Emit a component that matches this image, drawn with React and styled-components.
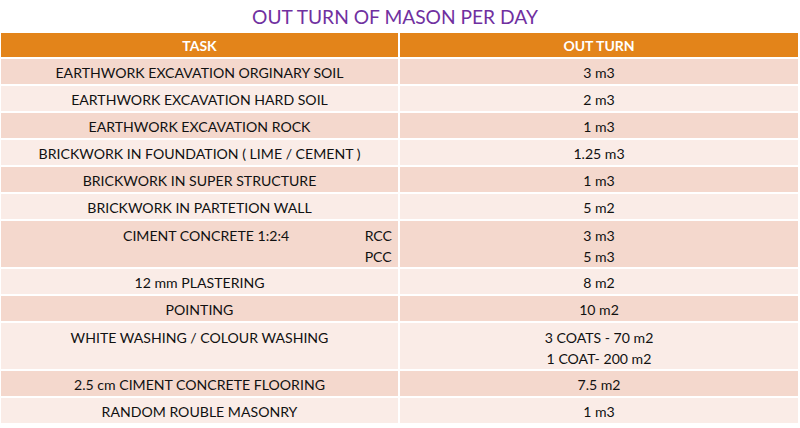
import React from "react";
import styled, { createGlobalStyle } from "styled-components";

const Global = createGlobalStyle`
  html, body { margin: 0; padding: 0; background: #ffffff; }
  body { font-family: Lato, "Open Sans", sans-serif; }
`;

const Page = styled.div`
  width: 800px;
  height: 428px;
  overflow: hidden;
  background: #ffffff;
  display: flex;
  flex-direction: column;
`;

const Title = styled.h1`
  margin: 0;
  height: 33px;
  display: flex;
  align-items: center;
  justify-content: center;
  padding-right: 10px;
  font-family: Lato, "Open Sans", sans-serif;
  font-weight: 400;
  font-size: 19.2px;
  color: #7030a0;
  letter-spacing: 0;
`;

const Table = styled.div`
  margin-left: 1px;
  width: 797px;
  display: grid;
  grid-template-columns: 397px 398px;
  column-gap: 2px;
  row-gap: 2px;
  background: #ffffff;
`;

const HeadCell = styled.div`
  height: 24px;
  background: #e3841a;
  color: #ffffff;
  font-weight: 700;
  font-size: 14px;
  display: flex;
  align-items: center;
  justify-content: center;
`;

const Cell = styled.div`
  height: ${(p) => (p.$tall ? 46 : 25)}px;
  background: ${(p) => (p.$dark ? "#f4d8cd" : "#faece7")};
  color: #111111;
  font-size: 14.1px;
  display: flex;
  align-items: ${(p) => (p.$tall ? "flex-start" : "center")};
  justify-content: center;
  box-sizing: border-box;
  padding-top: ${(p) => (p.$tall ? 4 : 1)}px;
`;

const Lines = styled.div`
  display: flex;
  flex-direction: column;
  align-items: center;
  line-height: 21px;
`;

const SplitCell = styled(Cell)`
  justify-content: space-between;
  padding-left: 122px;
  padding-right: 6px;
`;

const SideLines = styled.div`
  display: flex;
  flex-direction: column;
  align-items: flex-start;
  line-height: 21px;
`;

const rows = [
  { task: "EARTHWORK EXCAVATION ORGINARY SOIL", out: ["3 m3"] },
  { task: "EARTHWORK EXCAVATION HARD SOIL", out: ["2 m3"] },
  { task: "EARTHWORK EXCAVATION ROCK", out: ["1 m3"] },
  { task: "BRICKWORK IN FOUNDATION ( LIME / CEMENT )", out: ["1.25 m3"] },
  { task: "BRICKWORK IN SUPER STRUCTURE", out: ["1 m3"] },
  { task: "BRICKWORK IN PARTETION WALL", out: ["5 m2"] },
  { task: "CIMENT CONCRETE 1:2:4", side: ["RCC", "PCC"], out: ["3 m3", "5 m3"] },
  { task: "12 mm PLASTERING", out: ["8 m2"] },
  { task: "POINTING", out: ["10 m2"] },
  { task: "WHITE WASHING / COLOUR WASHING", out: ["3 COATS - 70 m2", "1 COAT- 200 m2"] },
  { task: "2.5 cm CIMENT CONCRETE FLOORING", out: ["7.5 m2"] },
  { task: "RANDOM ROUBLE MASONRY", out: ["1 m3"] },
];

export default function App() {
  return (
    <Page>
      <Global />
      <Title>OUT TURN OF MASON PER DAY</Title>
      <Table>
        <HeadCell>TASK</HeadCell>
        <HeadCell>OUT TURN</HeadCell>
        {rows.map((r, i) => {
          const dark = i % 2 === 0;
          const tall = r.out.length > 1;
          return (
            <React.Fragment key={i}>
              {r.side ? (
                <SplitCell $dark={dark} $tall={tall}>
                  <Lines>
                    <span>{r.task}</span>
                  </Lines>
                  <SideLines>
                    {r.side.map((s) => (
                      <span key={s}>{s}</span>
                    ))}
                  </SideLines>
                </SplitCell>
              ) : (
                <Cell $dark={dark} $tall={tall}>
                  <Lines>
                    <span>{r.task}</span>
                  </Lines>
                </Cell>
              )}
              <Cell $dark={dark} $tall={tall}>
                <Lines>
                  {r.out.map((o) => (
                    <span key={o}>{o}</span>
                  ))}
                </Lines>
              </Cell>
            </React.Fragment>
          );
        })}
      </Table>
    </Page>
  );
}
